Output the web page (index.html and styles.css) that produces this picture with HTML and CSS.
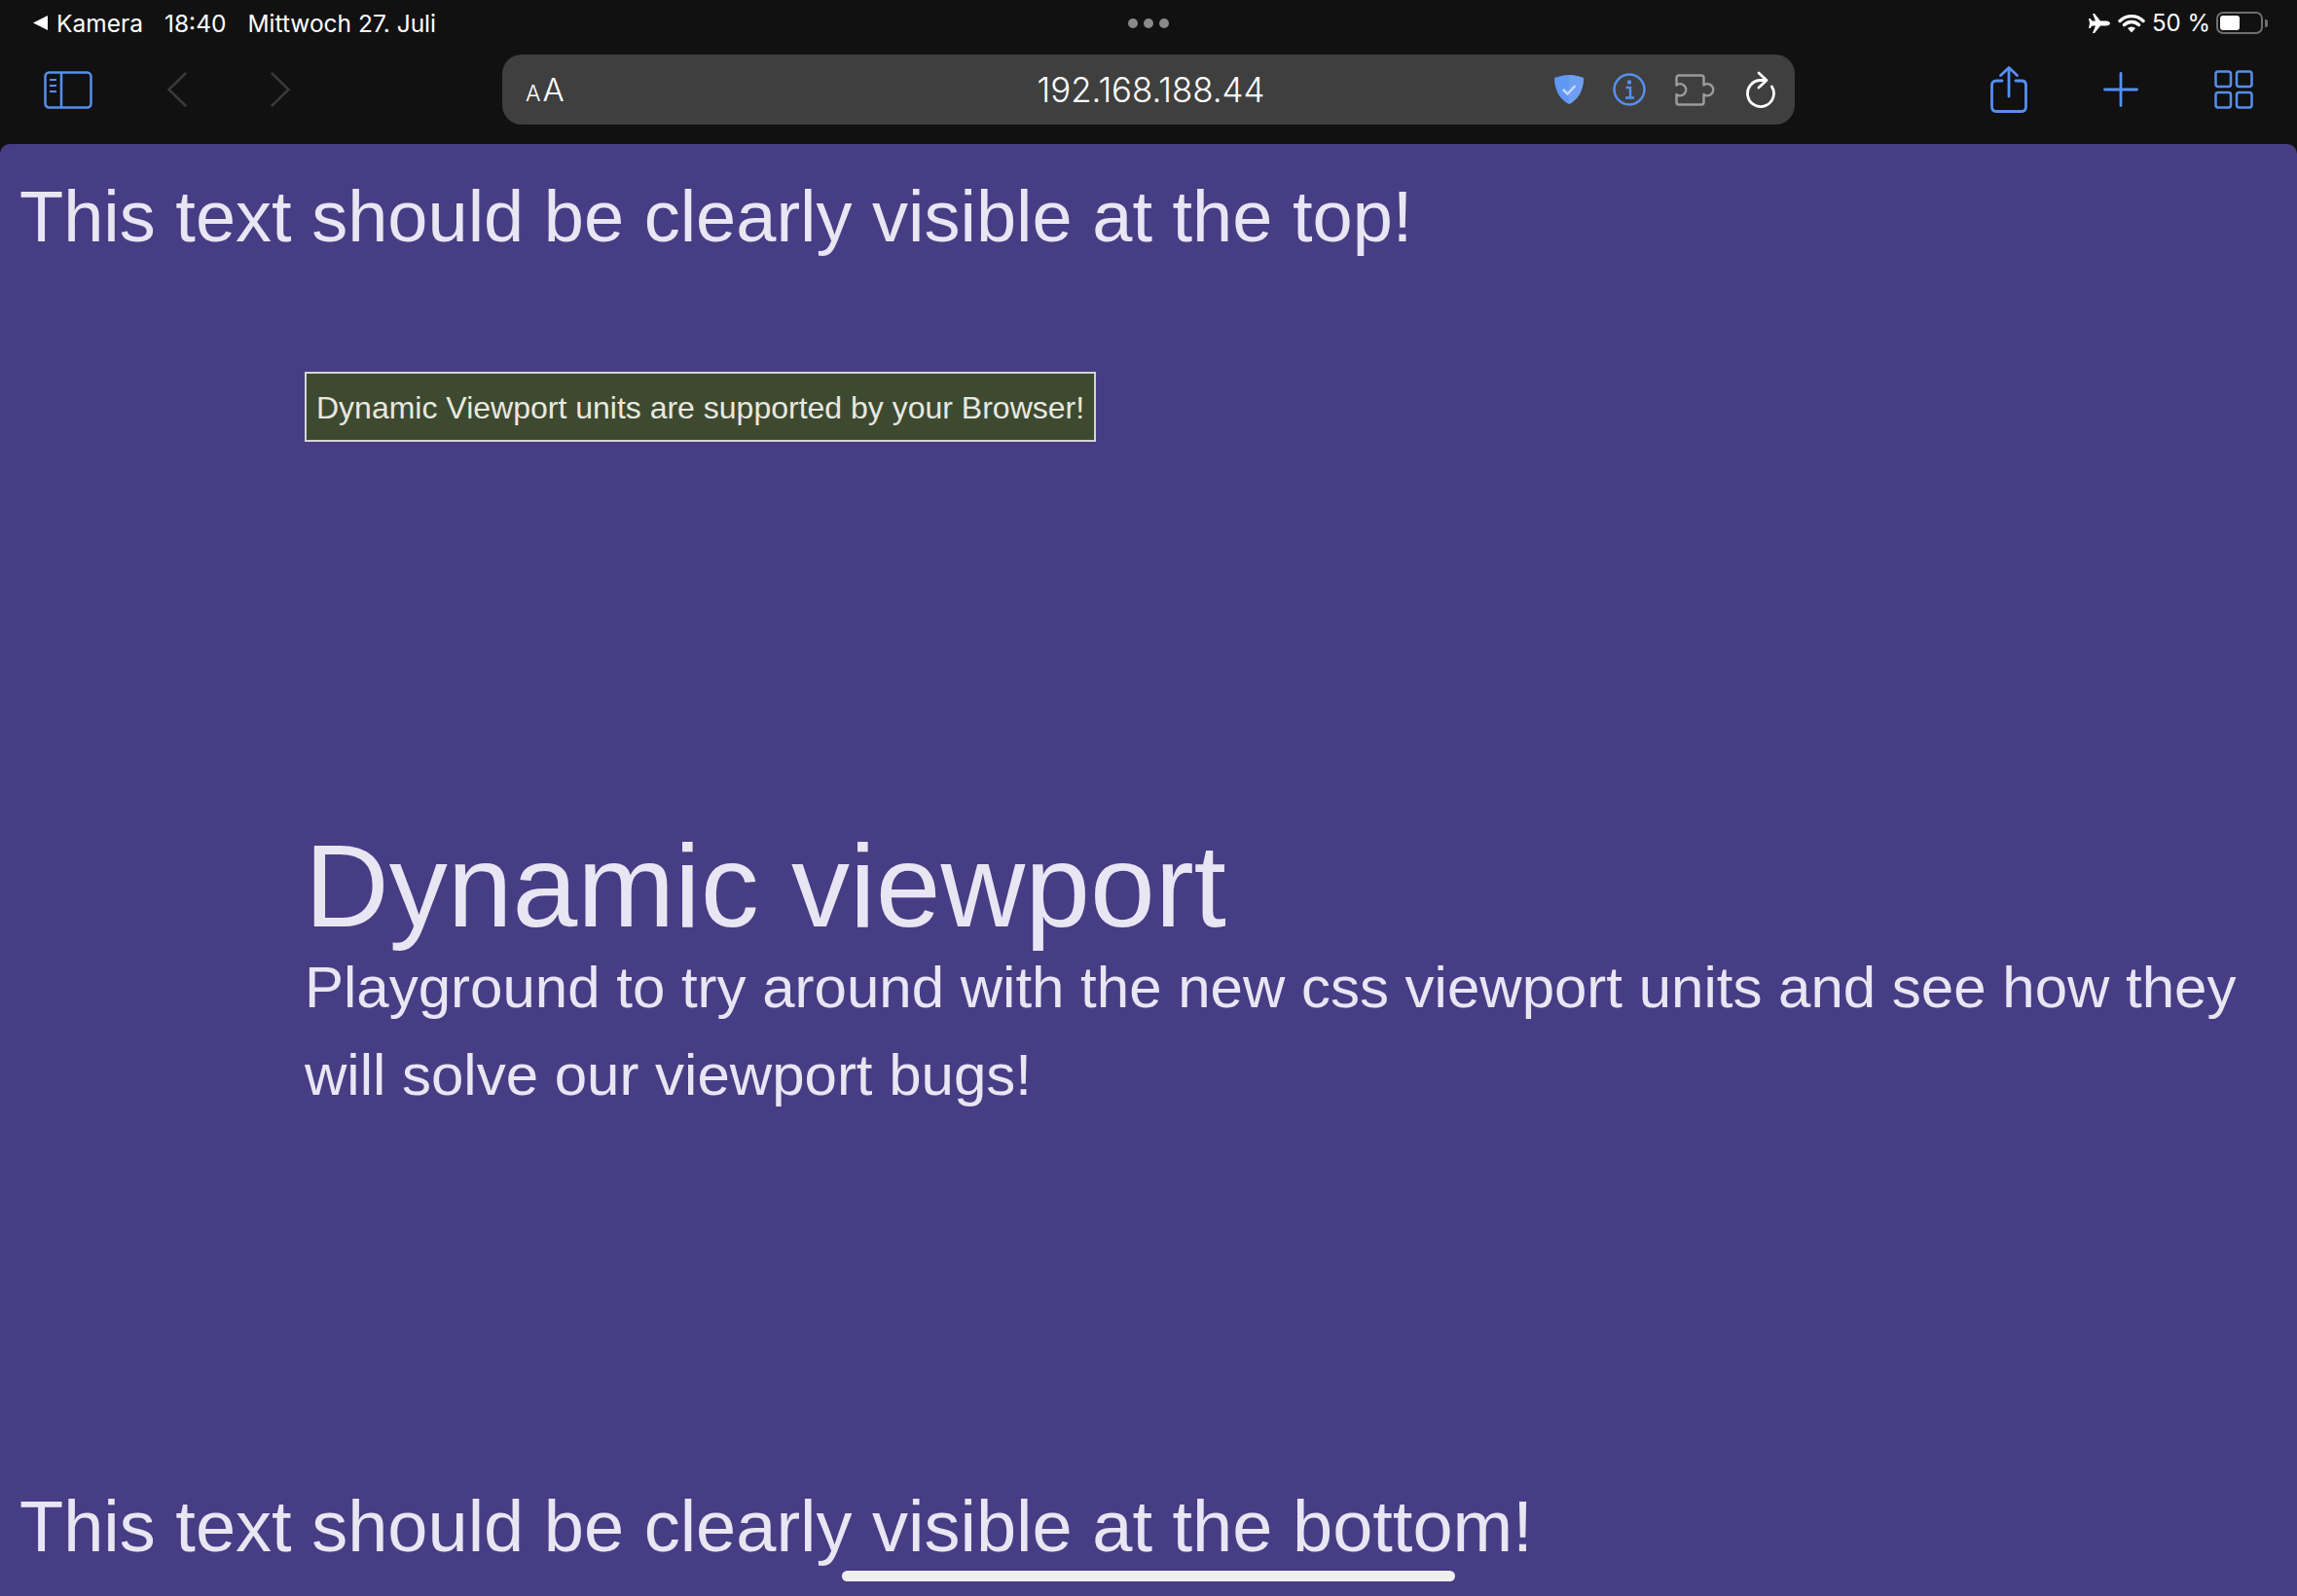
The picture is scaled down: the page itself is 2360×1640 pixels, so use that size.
FILE: index.html
```html
<!DOCTYPE html>
<html lang="de">
<head>
    <meta charset="UTF-8">
    <meta name="viewport" content="width=device-width, initial-scale=1.0">
    <title>Dynamic viewport</title>
    <link rel="stylesheet" href="styles.css">
</head>
<body>
<div class="status-bar">
    <div class="status-left">
        <span class="back-app"><svg width="15" height="15" viewBox="0 0 15 15"><path d="M15 0v15L0 7.500z" fill="#fff"/></svg>Kamera</span>
        <span>18:40</span>
        <span>Mittwoch 27. Juli</span>
    </div>
    <div class="status-dots"><i></i><i></i><i></i></div>
    <div class="status-right">
        <svg width="22" height="20" viewBox="0 0 22 20"><path d="M4 0h2l6 7.500h5.500c3 0 4.500 1.500 4.500 2.500s-1.500 2.500-4.500 2.500H12L6 20H4l3-7.500H3.500L1.500 15H0l1-5-1-5h1.500l2 2.500H7z" fill="#fff"/></svg>
        <svg width="28" height="20" viewBox="0 0 28 20"><path d="M2 7.500c7-6.500 17-6.500 24 0M6.500 11.500c4.500-4 10.500-4 15 0" fill="none" stroke="#fff" stroke-width="3.400" stroke-linecap="round"/><path d="M10 15c2.500-2 5.500-2 8 0l-4 4.500z" fill="#fff"/></svg>
        <span class="battery-text">50 %</span>
        <div class="battery"><div class="battery-level"></div></div>
        <div class="battery-nub"></div>
    </div>
</div>

<div class="toolbar">
    <div class="toolbar-left">
        <svg width="50" height="39" viewBox="0 0 50 39" fill="none" stroke="#5590f0" stroke-width="2.500"><rect x="1.500" y="1.500" width="47" height="36" rx="4"/><path d="M18 1.500v36"/><path d="M6 9h7M6 15h7M6 21h7" stroke-width="2"/></svg>
        <svg class="nav-back" width="20" height="36" viewBox="0 0 20 36" fill="none" stroke="#3a3a3a" stroke-width="2.500" stroke-linecap="round"><path d="M18.500 1.500L1.500 18l17 16.500"/></svg>
        <svg class="nav-forward" width="20" height="36" viewBox="0 0 20 36" fill="none" stroke="#3a3a3a" stroke-width="2.500" stroke-linecap="round"><path d="M1.500 1.500L18.500 18l-17 16.500"/></svg>
    </div>
    <div class="url-bar">
        <div class="reader"><span class="reader-small">A</span><span class="reader-big">A</span></div>
        <div class="url">192.168.188.44</div>
        <div class="url-icons">
            <svg width="30" height="30" viewBox="0 0 30 30"><path d="M15 0c5 0 11 1.500 15 3 0 12-5 22-15 27C5 25 0 15 0 3c4-1.500 10-3 15-3z" fill="#5f97f3"/><path d="M15 0c5 0 11 1.500 15 3 0 12-5 22-15 27z" fill="#6f9ff0"/><path d="M9 15l4.500 4.500 8-8.500" fill="none" stroke="#c6d9fa" stroke-width="2.500"/></svg>
            <svg width="34" height="34" viewBox="0 0 34 34" fill="none" stroke="#5590f0" stroke-width="2.500"><circle cx="17" cy="17" r="15.500"/><circle cx="17" cy="9.500" r="2.200" fill="#5590f0" stroke="none"/><path d="M13.500 15H18v10M13 25.500h9"/></svg>
            <svg width="42" height="33" viewBox="0 0 42 33" fill="none" stroke="#9b9b9b" stroke-width="2.500" stroke-linejoin="round"><path d="M4 1.500H27a2.500 2.500 0 0 1 2.500 2.500V11.500A6 6 0 1 1 29.500 21V29a2.500 2.500 0 0 1-2.500 2.500H4a2.500 2.500 0 0 1-2.500-2.500V21A6 6 0 1 0 1.500 11.500V4A2.500 2.500 0 0 1 4 1.500z"/></svg>
            <svg width="32" height="38" viewBox="0 0 32 38" fill="none" stroke="#fff" stroke-width="2.800" stroke-linecap="round" stroke-linejoin="round"><path d="M20 9.500H16A13.500 13.500 0 1 0 27.500 16"/><path d="M14 2l8 7.500-8 7.500"/></svg>
        </div>
    </div>
    <div class="toolbar-right">
        <svg width="38" height="48" viewBox="0 0 38 48" fill="none" stroke="#5590f0" stroke-width="2.800" stroke-linecap="round"><path d="M12 15H6q-4.500 0-4.500 4.500v22q0 5 4.500 5h26q4.500 0 4.500-5v-22q0-4.500-4.500-4.500h-6"/><path d="M19 31V2M10.500 9.500L19 1.500l8.500 8"/></svg>
        <svg width="36" height="36" viewBox="0 0 36 36" stroke="#5590f0" stroke-width="2.800" stroke-linecap="round"><path d="M18 1.500v33M1.500 18h33"/></svg>
        <svg width="40" height="40" viewBox="0 0 40 40" fill="none" stroke="#5590f0" stroke-width="2.500"><rect x="1.500" y="1.500" width="15.500" height="15.500" rx="2.500"/><rect x="23" y="1.500" width="15.500" height="15.500" rx="2.500"/><rect x="1.500" y="23" width="15.500" height="15.500" rx="2.500"/><rect x="23" y="23" width="15.500" height="15.500" rx="2.500"/></svg>
    </div>
</div>

<div class="page">
    <div class="edge-text">This text should be clearly visible at the top!</div>
    <div class="content">
        <div class="support-note">Dynamic Viewport units are supported by your Browser!</div>
        <h1>Dynamic viewport</h1>
        <p>Playground to try around with the new css viewport units and see how they will solve our viewport bugs!</p>
    </div>
    <div class="edge-text bottom">This text should be clearly visible at the bottom!</div>
    <div class="home-indicator"></div>
</div>
</body>
</html>
```

FILE: styles.css
```css
* {
    margin: 0;
    padding: 0;
    box-sizing: border-box;
}

html, body {
    height: 100%;
}

body {
    background: #111112;
    font-family: Inter, 'Liberation Sans', sans-serif;
    color: #fff;
    display: flex;
    flex-direction: column;
    overflow: hidden;
}

svg {
    display: block;
    flex: none;
}

.status-bar {
    height: 47px;
    padding: 0 30px;
    display: grid;
    grid-template-columns: 1fr auto 1fr;
    align-items: center;
    font-size: 24.5px;
}

.status-left {
    display: flex;
    gap: 22px;
    padding-left: 4px;
}

.back-app {
    display: flex;
    align-items: center;
    gap: 9px;
}

.status-dots {
    display: flex;
    gap: 6px;
}

.status-dots i {
    width: 10px;
    height: 10px;
    border-radius: 50%;
    background: #8a8a8a;
}

.status-right {
    display: flex;
    align-items: center;
    justify-content: flex-end;
    gap: 8px;
}

.battery-text {
    font-size: 24px;
    margin-left: -1px;
    margin-right: -2px;
}

.battery {
    width: 48px;
    height: 23px;
    border: 2px solid #6f6f6f;
    border-radius: 7px;
    padding: 2px;
}

.battery-level {
    width: 20px;
    height: 100%;
    background: #fff;
    border-radius: 3px;
}

.battery-nub {
    width: 3px;
    height: 8px;
    margin-left: -6px;
    background: #6f6f6f;
    border-radius: 0 2px 2px 0;
}

.toolbar {
    height: 101px;
    display: grid;
    grid-template-columns: 516px 1328px 1fr;
    padding-top: 9px;
}

.toolbar-left {
    display: flex;
    align-items: flex-start;
    padding: 17px 0 0 45px;
}

.nav-back {
    margin: 1px 0 0 77px;
}

.nav-forward {
    margin: 1px 0 0 86px;
}

.url-bar {
    height: 72px;
    background: #3f3f3f;
    border-radius: 20px;
    display: grid;
    grid-template-columns: 1fr auto 1fr;
    align-items: center;
    padding: 0 19px 0 24px;
}

.reader {
    display: flex;
    align-items: baseline;
    gap: 2px;
    font-weight: 300;
}

.reader-small {
    font-size: 23px;
}

.reader-big {
    font-size: 33px;
}

.url {
    font-size: 34.800px;
    font-weight: 300;
}

.url-icons {
    display: flex;
    align-items: center;
    justify-content: flex-end;
    gap: 30px;
}

.toolbar-right {
    height: 72px;
    display: flex;
    align-items: center;
    justify-content: flex-end;
    gap: 78px;
    padding-right: 45px;
}

.page {
    position: relative;
    flex: 1;
    background: #473d85;
    border-radius: 10px 10px 0 0;
    padding: 25px 20px 21px;
    display: flex;
    flex-direction: column;
    font-family: 'Liberation Sans', Arial, sans-serif;
    color: #e8e6f3;
}

.edge-text {
    font-size: 74px;
    line-height: 100px;
}

.edge-text.bottom {
    margin-top: auto;
}

.content {
    padding-left: 293px;
    margin-top: 109px;
}

.support-note {
    display: inline-block;
    padding: 0 10px;
    height: 72px;
    line-height: 70px;
    font-size: 32px;
    color: #e8e8e0;
    background: #3e4a2f;
    border: 2px solid #d4d4d4;
    vertical-align: top;
}

h1 {
    font-size: 120px;
    font-weight: 400;
    line-height: 120px;
    margin-top: 396px;
}

.content p {
    font-size: 60px;
    line-height: 90px;
}

.home-indicator {
    position: absolute;
    left: 865px;
    bottom: 15px;
    width: 630px;
    height: 11px;
    border-radius: 6px;
    background: #efefef;
}
```
